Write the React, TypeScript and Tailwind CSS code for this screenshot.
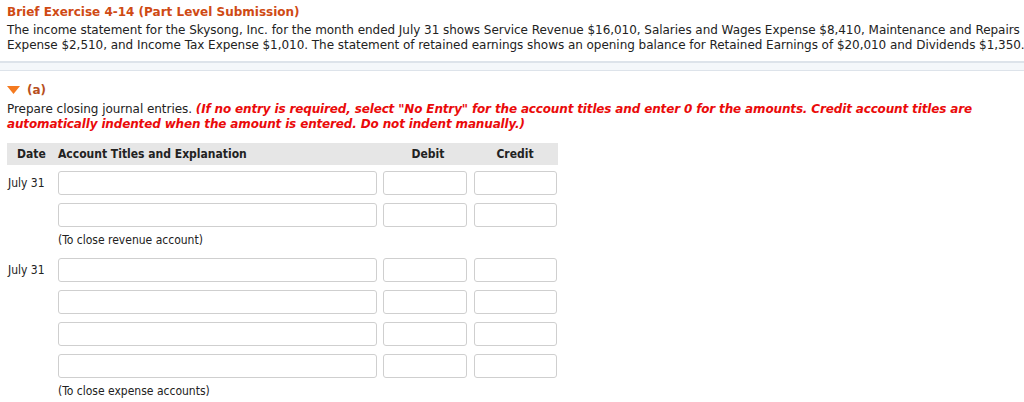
import React from "react";

const verdana = { fontFamily: '"DejaVu Sans", Verdana, sans-serif' };
const tahoma = { fontFamily: '"DejaVu Sans Condensed", "DejaVu Sans", Tahoma, sans-serif' };

type Entry = { rows: number; note: string };

const entries: Entry[] = [
  { rows: 2, note: "(To close revenue account)" },
  { rows: 4, note: "(To close expense accounts)" },
];

const Field: React.FC<{ className: string }> = ({ className }) => (
  <input
    type="text"
    className={`h-[24px] border border-[#cfcfcf] rounded-[3px] bg-white outline-none ${className}`}
  />
);

export default function App() {
  return (
    <div className="w-[1024px] h-[402px] bg-white overflow-hidden text-[#222]" style={verdana}>
      <div className="pl-[7px] pt-[4px]">
        <h1 className="text-[12px] font-bold text-[#cf4a14] leading-[16px]">
          Brief Exercise 4-14 (Part Level Submission)
        </h1>
        <p className="mt-[3px] text-[12px] leading-[15px] whitespace-nowrap tracking-[-0.04px]">
          The income statement for the Skysong, Inc. for the month ended July 31 shows Service Revenue
          $16,010, Salaries and Wages Expense $8,410, Maintenance and Repairs
          <br />
          Expense $2,510, and Income Tax Expense $1,010. The statement of retained earnings shows an
          opening balance for Retained Earnings of $20,010 and Dividends $1,350.
        </p>
      </div>

      <div className="mt-[8px] h-[10px] border-t-2 border-b border-[#dde3ea] bg-[#f4f7fa]" />

      <div className="pl-[7px] pt-[11px]">
        <div className="flex items-center gap-[7px] h-[16px]">
          <svg width="13" height="8" viewBox="0 0 13 8">
            <polygon points="0,0 13,0 6.5,8" fill="#f47a20" />
          </svg>
          <span className="text-[12px] font-bold text-[#b8501e]">(a)</span>
        </div>
        <p className="mt-[4px] text-[12px] leading-[15px] whitespace-nowrap tracking-[-0.04px]">
          Prepare closing journal entries.{" "}
          <em className="font-bold text-[#ea0a0a] tracking-[-0.15px]">
            (If no entry is required, select "No Entry" for the account titles and enter 0 for the
            amounts. Credit account titles are
            <br />
            automatically indented when the amount is entered. Do not indent manually.)
          </em>
        </p>

        <div className="mt-[11px] w-[551px]" style={tahoma}>
          <div className="flex items-center h-[22px] bg-[#e6e6e6] text-[12px] font-bold text-[#222]">
            <div className="w-[51px] pl-[10px]">Date</div>
            <div className="w-[325px]">Account Titles and Explanation</div>
            <div className="w-[90px] text-center">Debit</div>
            <div className="w-[84px] text-center">Credit</div>
          </div>

          {entries.map((entry, ei) => (
            <div key={ei} className={ei === 0 ? "pt-[6px]" : "pt-[10px]"}>
              {Array.from({ length: entry.rows }).map((_, ri) => (
                <div key={ri} className="flex items-center h-[24px] mb-[8px]">
                  <div className="w-[51px] text-[12px] pl-[1px]">{ri === 0 ? "July 31" : ""}</div>
                  <Field className="w-[319px]" />
                  <Field className="w-[84px] ml-[6px]" />
                  <Field className="w-[83px] ml-[7px]" />
                </div>
              ))}
              <div className="pl-[51px] text-[12px] leading-[15px] -mt-[2px]">{entry.note}</div>
            </div>
          ))}
        </div>
      </div>
    </div>
  );
}
